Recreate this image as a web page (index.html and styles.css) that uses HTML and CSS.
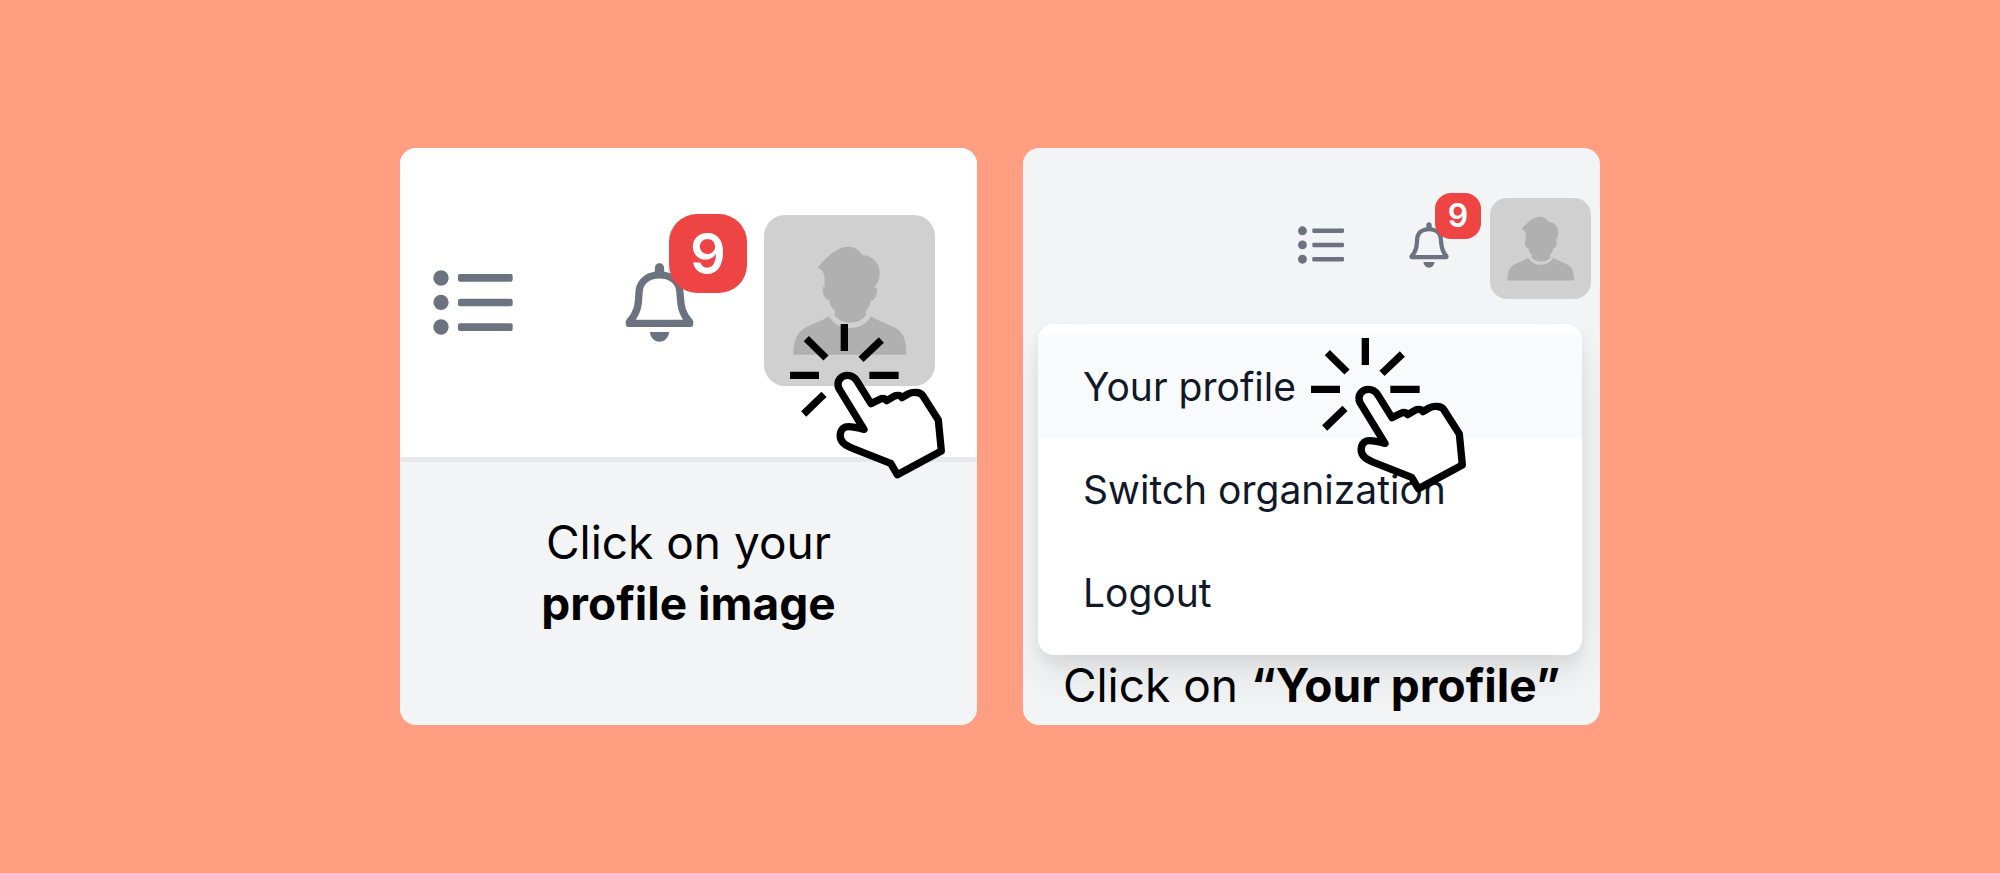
FILE: index.html
```html
<!DOCTYPE html>
<html lang="en">
<head>
<meta charset="utf-8">
<title>Open your profile</title>
<link rel="stylesheet" href="styles.css">
</head>
<body>
<svg class="sprite" aria-hidden="true">
  <symbol id="list" viewBox="130 390 238 195">
    <circle cx="153" cy="414" r="23"/><circle cx="153" cy="487" r="23"/><circle cx="153" cy="561" r="23"/>
    <rect x="204" y="402" width="164" height="23" rx="6"/><rect x="204" y="476" width="164" height="23" rx="6"/><rect x="204" y="550" width="164" height="23" rx="6"/>
  </symbol>
  <symbol id="bell" viewBox="104 188 208 238">
    <path d="M208 189c8 0 14 6 14 16v18h-28v-18c0-10 6-16 14-16z"/>
    <path d="M117 366C150 330 143 300 147 270C151 240 178 224 208 224C238 224 265 240 269 270C273 300 268 334 299 366V370H117Z" fill="none" stroke="currentColor" stroke-width="22" stroke-linejoin="round"/>
    <path d="M179 396h58c-2 18-14 29-29 29s-27-11-29-29z"/>
  </symbol>
  <symbol id="person" viewBox="70 73 513 513">
    <path d="M230 231C260 198 288 168 323 168C345 168 358 182 367 194C392 194 417 215 417 248C417 268 410 280 401 290C408 290 411 296 409 304C406 318 402 330 391 329C388 348 380 355 374 363L376 374C362 392 345 396 328 396C308 396 292 388 281 374L284 363C274 352 267 345 266 329C252 328 245 305 246 294C246 288 249 289 252 290C251 262 257 242 230 231Z"/>
    <path d="M158 492C160 440 172 420 205 405C230 394 248 389 264 377C278 400 300 412 328 412C356 412 378 400 391 377C408 389 430 396 455 407C488 422 497 445 497 492Z"/>
  </symbol>
  <symbol id="click" viewBox="144 396 480 474">
    <path d="M313 402V483M199 446L258 504M424 450L363 508M150 556H237M388 556H476M252 613L191 672" fill="none" stroke="#000" stroke-width="22"/>
    <path d="M393 641L350 572C342 560 332 556 323 556C303 556 287 574 297 596L372 718C350 713 332 706 316 711C296 720 296 748 312 761C318 767 328 770 340 776L452 820L472 854L604 783L595 690L549 618C542 606 520 604 504 612L486 623C482 615 470 615 462 619L440 632C434 625 426 625 420 628Z" fill="#fff" stroke="#000" stroke-width="22" stroke-linejoin="round"/>
  </symbol>
</svg>
<main class="steps">
  <section class="card">
    <header class="toolbar toolbar-large">
      <button class="icon-button" aria-label="Lists"><svg class="list-icon"><use href="#list"/></svg></button>
      <button class="icon-button bell" aria-label="Notifications"><svg class="bell-icon"><use href="#bell"/></svg><span class="badge">9</span></button>
      <button class="avatar" aria-label="Profile image"><svg class="person-icon"><use href="#person"/></svg></button>
    </header>
    <p class="caption">Click on your<br><strong>profile image</strong></p>
    <svg class="pointer pointer-avatar" aria-hidden="true"><use href="#click"/></svg>
  </section>
  <section class="card">
    <header class="toolbar toolbar-small">
      <button class="icon-button" aria-label="Lists"><svg class="list-icon"><use href="#list"/></svg></button>
      <button class="icon-button bell" aria-label="Notifications"><svg class="bell-icon"><use href="#bell"/></svg><span class="badge">9</span></button>
      <button class="avatar" aria-label="Profile image"><svg class="person-icon"><use href="#person"/></svg></button>
    </header>
    <nav class="menu">
      <a class="menu-item active" href="#profile">Your profile</a>
      <a class="menu-item" href="#organization">Switch organization</a>
      <a class="menu-item" href="#logout">Logout</a>
    </nav>
    <p class="caption caption-menu">Click on <strong>“Your profile”</strong></p>
    <svg class="pointer pointer-menu" aria-hidden="true"><use href="#click"/></svg>
  </section>
</main>
</body>
</html>
```
FILE: styles.css
```css
* { box-sizing: border-box; }

body {
  margin: 0;
  background: #ff9e80;
  font-family: Inter, "Liberation Sans", sans-serif;
}

.sprite { position: absolute; width: 0; height: 0; }

.steps {
  min-height: 100vh;
  display: flex;
  justify-content: center;
  align-items: center;
  gap: 46px;
}

.card {
  position: relative;
  flex: 0 1 577px;
  min-height: 577px;
  overflow: hidden;
  border-radius: 16px;
  background: #f3f4f6;
}

.toolbar {
  display: flex;
  justify-content: flex-end;
  align-items: center;
}

.toolbar-large {
  padding: 67px 42px 71px 33px;
  border-bottom: 5px solid #e5e7eb;
  background: #fff;
}

.toolbar-small { padding: 50px 9px 25px; }

.icon-button {
  display: block;
  padding: 0;
  border: 0;
  background: none;
  color: #6b7280;
  font-family: inherit;
}

.icon-button svg,
.person-icon { display: block; fill: currentColor; }

.bell { position: relative; }

.badge {
  position: absolute;
  display: flex;
  justify-content: center;
  align-items: center;
  background: #ef4444;
  color: #fff;
  font-weight: 600;
}

.avatar {
  padding: 0;
  border: 0;
  overflow: hidden;
  background: #d0d0d0;
  color: #b0b0b0;
}

.person-icon { width: 100%; height: 100%; }

.toolbar-large .icon-button { margin-top: 4px; }
.toolbar-large .list-icon { width: 80px; height: 65px; }
.toolbar-large .bell { margin-left: 112px; margin-right: 70px; }
.toolbar-large .bell-icon { width: 69px; height: 79px; }
.toolbar-large .badge { left: 44px; top: -49px; width: 78px; height: 79px; border-radius: 28px; font-size: 56px; }
.toolbar-large .avatar { width: 171px; height: 171px; border-radius: 21px; }

.toolbar-small .icon-button { margin-bottom: 8px; }
.toolbar-small .list-icon { width: 46px; height: 38px; }
.toolbar-small .bell { margin-left: 65px; margin-right: 41px; }
.toolbar-small .bell-icon { width: 40px; height: 46px; }
.toolbar-small .badge { left: 26px; top: -29px; width: 46px; height: 46px; border-radius: 16px; font-size: 32px; }
.toolbar-small .avatar { width: 101px; height: 101px; border-radius: 17px; }

.menu {
  margin: 0 18px 0 15px;
  padding: 11px 0;
  border-radius: 16px;
  background: #fff;
  box-shadow: 0 22px 40px rgba(0, 0, 0, 0.08), 0 8px 14px rgba(0, 0, 0, 0.06);
}

.menu-item {
  display: block;
  padding: 0 45px;
  color: #111827;
  font-size: 39px;
  line-height: 103px;
  text-decoration: none;
}

.active { background: #f9fafb; }

.caption {
  margin: 50px 0 0;
  color: #000;
  font-size: 46px;
  line-height: 61px;
  text-align: center;
}

.caption-menu { position: relative; margin: 0; }

.pointer { position: absolute; width: 160px; height: 158px; }
.pointer-avatar { left: 388px; top: 174px; }
.pointer-menu { left: 286px; top: 188px; }
```
